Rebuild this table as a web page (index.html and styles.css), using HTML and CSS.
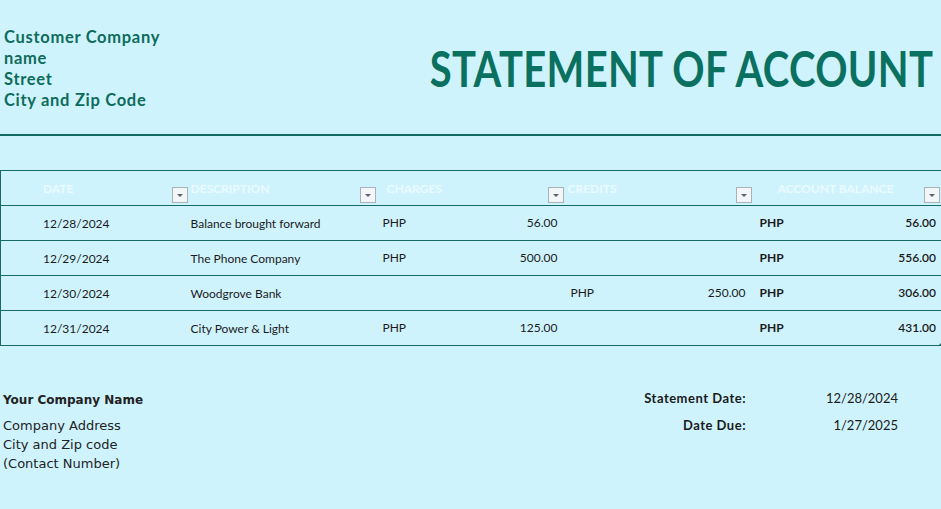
FILE: index.html
```html
<!DOCTYPE html>
<html>
<head>
<meta charset="utf-8">
<link rel="stylesheet" href="styles.css">
</head>
<body>
<div class="page">
  <header class="top">
    <div class="customer">
      <div>Customer Company name</div>
      <div>Street</div>
      <div>City and Zip Code</div>
    </div>
    <h1 class="title">STATEMENT OF ACCOUNT</h1>
  </header>
  <div class="rule"></div>
  <table class="ledger">
    <thead>
      <tr>
        <th class="c-date"><span class="hl">DATE</span><span class="dd"></span></th>
        <th class="c-desc"><span class="hl">DESCRIPTION</span><span class="dd"></span></th>
        <th class="c-chg"><span class="hl">CHARGES</span><span class="dd"></span></th>
        <th class="c-cr"><span class="hl">CREDITS</span><span class="dd"></span></th>
        <th class="c-bal"><span class="hl">ACCOUNT BALANCE</span><span class="dd"></span></th>
      </tr>
    </thead>
    <tbody>
      <tr>
        <td class="c-date">12/28/2024</td>
        <td class="c-desc">Balance brought forward</td>
        <td class="c-chg"><div class="money"><span>PHP</span><span class="num">56.00</span></div></td>
        <td class="c-cr"></td>
        <td class="c-bal"><div class="money bold"><span>PHP</span><span class="num">56.00</span></div></td>
      </tr>
      <tr>
        <td class="c-date">12/29/2024</td>
        <td class="c-desc">The Phone Company</td>
        <td class="c-chg"><div class="money"><span>PHP</span><span class="num">500.00</span></div></td>
        <td class="c-cr"></td>
        <td class="c-bal"><div class="money bold"><span>PHP</span><span class="num">556.00</span></div></td>
      </tr>
      <tr>
        <td class="c-date">12/30/2024</td>
        <td class="c-desc">Woodgrove Bank</td>
        <td class="c-chg"></td>
        <td class="c-cr"><div class="money"><span>PHP</span><span class="num">250.00</span></div></td>
        <td class="c-bal"><div class="money bold"><span>PHP</span><span class="num">306.00</span></div></td>
      </tr>
      <tr>
        <td class="c-date">12/31/2024</td>
        <td class="c-desc">City Power &amp; Light</td>
        <td class="c-chg"><div class="money"><span>PHP</span><span class="num">125.00</span></div></td>
        <td class="c-cr"></td>
        <td class="c-bal"><div class="money bold"><span>PHP</span><span class="num">431.00</span></div><span class="corner"></span></td>
      </tr>
    </tbody>
  </table>
  <footer class="bottom">
    <div class="sender">
      <div class="sender-name">Your Company Name</div>
      <div>Company Address</div>
      <div>City and Zip code</div>
      <div>(Contact Number)</div>
    </div>
    <div class="dates">
      <div class="date-row"><span class="dl">Statement Date:</span><span class="dv">12/28/2024</span></div>
      <div class="date-row"><span class="dl">Date Due:</span><span class="dv">1/27/2025</span></div>
    </div>
  </footer>
</div>
</body>
</html>
```

FILE: styles.css
```css
html, body {
  margin: 0;
  padding: 0;
  background: #cff3fd;
}
body {
  width: 941px;
  height: 509px;
  overflow: hidden;
  font-family: "Lato", "Open Sans", sans-serif;
}
.page {
  display: flex;
  flex-direction: column;
}
.top {
  display: flex;
  justify-content: space-between;
  align-items: flex-start;
  height: 134px;
}
.customer {
  width: 172px;
  padding: 27px 0 0 4px;
  color: #0d6b5b;
  font-weight: 700;
  font-size: 16.5px;
  letter-spacing: 0.7px;
  line-height: 21px;
}
.title {
  margin: 38px 8px 0 0;
  color: #0a705f;
  font-size: 50px;
  font-weight: 700;
  letter-spacing: 0.4px;
  line-height: 60px;
  white-space: nowrap;
  transform: scaleX(0.8);
  transform-origin: right center;
}
.rule {
  height: 2px;
  background: #136a62;
}
.ledger {
  margin-top: 34px;
  width: 941px;
  border-collapse: collapse;
  table-layout: fixed;
  font-size: 12px;
  color: #1b1b1b;
  border-left: 1px solid #176b63;
  border-right: 1px solid #176b63;
}
.ledger th, .ledger td {
  border-top: 1px solid #176b63;
  border-bottom: 1px solid #176b63;
  height: 35px;
  padding: 0;
  box-sizing: border-box;
  position: relative;
  vertical-align: middle;
  text-align: left;
}
.ledger th {
  font-weight: 700;
  color: #eafaff;
  font-size: 12px;
  vertical-align: top;
}
.hl {
  display: block;
  padding-top: 10px;
}
.dd {
  position: absolute;
  right: 1px;
  bottom: 2px;
  width: 14px;
  height: 14px;
  border: 1px solid #a9b3b7;
  background: #f2f6f8;
}
.dd::after {
  content: "";
  position: absolute;
  left: 4px;
  top: 6px;
  border-left: 3px solid transparent;
  border-right: 3px solid transparent;
  border-top: 3px solid #5d6166;
}
.c-date { width: 188px; }
.c-desc { width: 188px; }
.c-chg { width: 188px; }
.c-cr { width: 188px; }
.c-bal { width: 189px; }
th.c-date .hl, td.c-date { padding-left: 42px; }
th.c-desc .hl, td.c-desc { padding-left: 2px; }
th.c-chg .hl { padding-left: 10px; }
th.c-cr .hl { padding-left: 3px; }
th.c-bal .hl { padding-left: 25px; }
.money {
  display: flex;
  justify-content: space-between;
  padding: 0 7px 0 6px;
  margin-top: -2px;
}
.c-bal .money { padding: 0 5px 0 7px; }
.bold { font-weight: 700; }
.bold .num { font-weight: 600; }
.corner {
  position: absolute;
  right: -1px;
  bottom: -1px;
  width: 0;
  height: 0;
  border-left: 4px solid transparent;
  border-bottom: 4px solid #176b63;
}
.bottom {
  display: flex;
  justify-content: space-between;
  padding-top: 45px;
  font-size: 13px;
  color: #1a1a1a;
}
.sender {
  padding-left: 3px;
  line-height: 19px;
  font-family: "DejaVu Sans", "Lato", sans-serif;
  font-size: 13px;
  color: #222;
}
.sender-name {
  font-weight: 700;
  font-size: 12px;
  margin-bottom: 6px;
}
.dates {
  display: flex;
  flex-direction: column;
  gap: 8px;
  padding-right: 43px;
  margin-top: -2px;
}
.date-row {
  display: flex;
  line-height: 19px;
}
.dl {
  width: 140px;
  text-align: right;
  font-weight: 700;
  letter-spacing: 0.5px;
}
.dv {
  width: 152px;
  text-align: right;
}
```
